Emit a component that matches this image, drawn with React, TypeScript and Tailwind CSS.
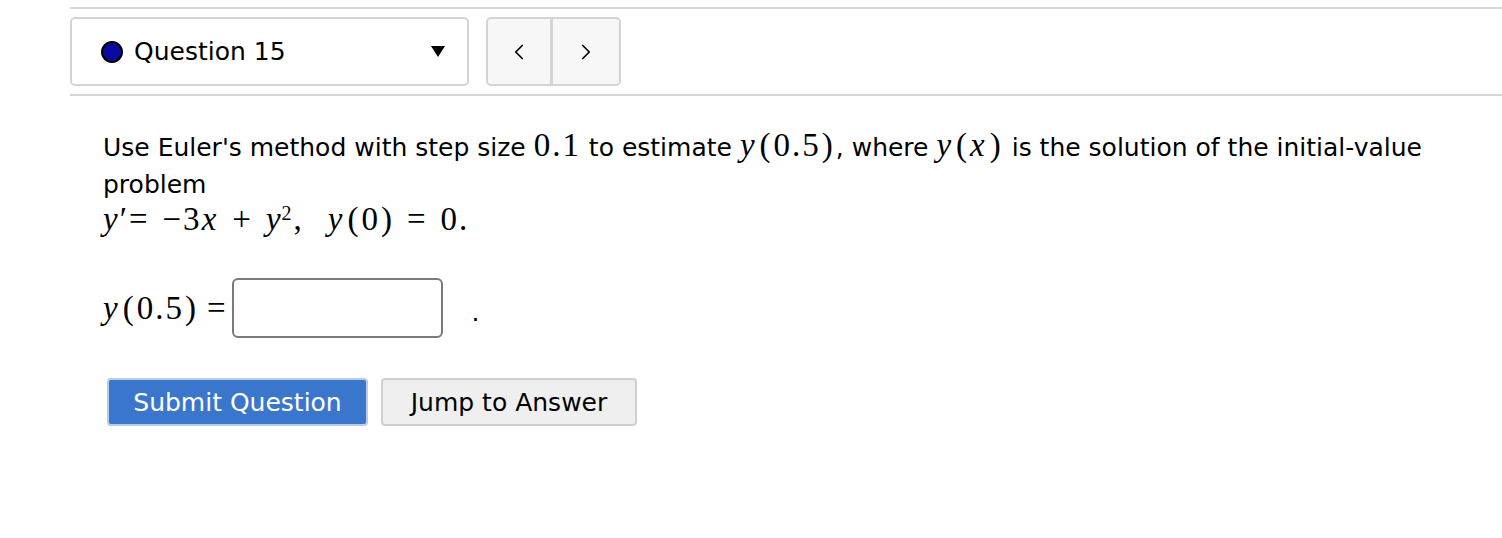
import { ChevronLeft, ChevronRight } from "lucide-react";

const sans = "font-['DejaVu_Sans','Verdana',sans-serif]";
const math = "font-['Liberation_Serif','DejaVu_Serif',serif]";

function M({ children }: { children: React.ReactNode }) {
  return <span className={`${math} text-[33px] tracking-[2px] leading-[30px]`}>{children}</span>;
}

function I({ children }: { children: React.ReactNode }) {
  return <i className="italic mr-[2px]">{children}</i>;
}

function P({ children }: { children: React.ReactNode }) {
  return <span className="mx-[1px]">{children}</span>;
}

// binary operator / relation with MathJax-like spacing
function Op({ children, l = "ml-[12px]" }: { children: React.ReactNode; l?: string }) {
  return <span className={`${l} mr-[13px]`}>{children}</span>;
}

export default function App() {
  return (
    <div className={`w-[1502px] h-[538px] bg-white text-black ${sans}`}>
      <div className="pl-[70px] pt-[7px]">
        <div className="border-t-2 border-[#d4d4d4]" />
        <div className="flex items-center gap-[17px] py-[8px]">
          <div className="w-[399px] h-[69px] border-2 border-[#d4d4d4] rounded-[5px] flex items-center pl-[29px] pr-[22px]">
            <span className="w-[22px] h-[22px] rounded-full bg-[#0a0aa0] border-2 border-black" />
            <span className="ml-[11px] text-[25px]">Question 15</span>
            <span className="ml-auto w-0 h-0 border-l-[7px] border-r-[7px] border-t-[11px] border-l-transparent border-r-transparent border-t-black" />
          </div>
          <div className="flex h-[69px] border-2 border-[#d4d4d4] rounded-[5px] bg-[#f7f7f7] overflow-hidden">
            <button className="w-[65px] flex items-center justify-center border-r-[3px] border-[#d4d4d4]">
              <ChevronLeft className="w-[26px] h-[26px]" strokeWidth={1.6} />
            </button>
            <button className="w-[66px] flex items-center justify-center">
              <ChevronRight className="w-[26px] h-[26px]" strokeWidth={1.6} />
            </button>
          </div>
        </div>
        <div className="border-t-2 border-[#d4d4d4]" />
      </div>

      <div className="pl-[103px] pt-[33px] text-[25px] leading-[37px]">
        <p>
          Use Euler's method with step size <M>0.1</M> to estimate{" "}
          <M>
            <I>y</I>
            <P>(</P>0.5<P>)</P>
          </M>
          , where{" "}
          <M>
            <I>y</I>
            <P>(</P>
            <I>x</I>
            <P>)</P>
          </M>{" "}
          is the solution of the initial-value
          <br />
          problem
          <br />
          <M>
            <i className="italic">y</i>′<Op l="ml-0">=</Op>−3<I>x</I>
            <Op>+</Op>
            <I>y</I>
            <sup className="text-[20px] -ml-[3px]">2</sup>,<span className="inline-block w-[24px]" />
            <I>y</I>
            <P>(</P>0<P>)</P>
            <Op>=</Op>0.
          </M>
        </p>

        <div className="flex items-center mt-[38px]">
          <M>
            <I>y</I>
            <P>(</P>0.5<P>)</P>
            <span className="ml-[8px]">=</span>
          </M>
          <div className="ml-[4px] w-[211px] h-[60px] border-2 border-[#7a7a7a] rounded-[6px]" />
          <span className="ml-[29px] mt-[8px] text-[25px]">.</span>
        </div>

        <div className="flex gap-[13px] mt-[40px] ml-[4px]">
          <button className="w-[261px] h-[48px] bg-[#3b76cd] border-2 border-[#b9cbe6] rounded-[4px] text-white text-[25px]">
            Submit Question
          </button>
          <button className="w-[256px] h-[48px] bg-[#efefef] border-2 border-[#cfcfcf] rounded-[4px] text-[25px]">
            Jump to Answer
          </button>
        </div>
      </div>
    </div>
  );
}
